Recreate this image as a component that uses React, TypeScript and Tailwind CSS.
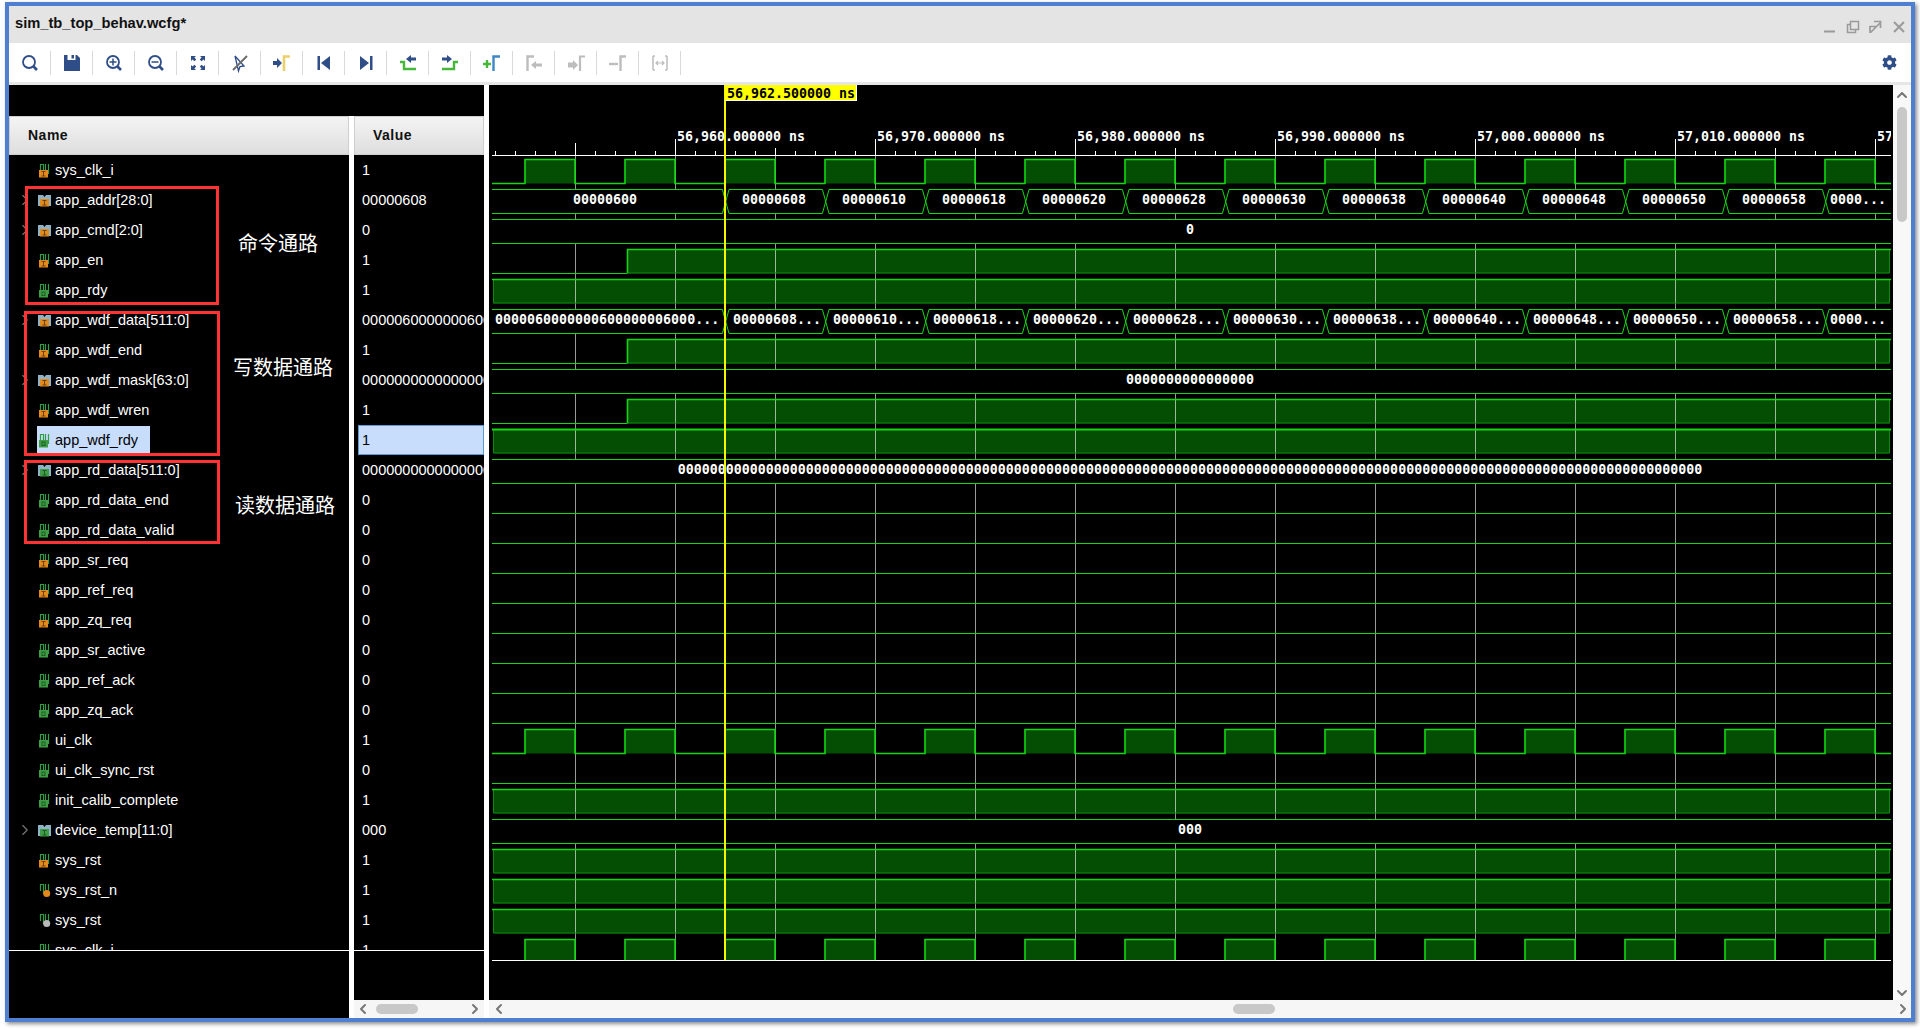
import { ChevronDown, ChevronLeft, ChevronRight, ChevronUp } from "lucide-react";
import { FaCog } from "react-icons/fa";

type SigKind = "in" | "out" | "busIn" | "busOut" | "reg" | "var";
type WaveKind = "clk" | "addr" | "wdf" | "step" | "high" | "low" | "solid";

interface Signal {
  name: string;
  value: string;
  kind: SigKind;
  wave: WaveKind;
  text?: string;
}

const signals: Signal[] = [
  { name: "sys_clk_i", value: "1", kind: "in", wave: "clk" },
  { name: "app_addr[28:0]", value: "00000608", kind: "busIn", wave: "addr" },
  { name: "app_cmd[2:0]", value: "0", kind: "busIn", wave: "solid", text: "0" },
  { name: "app_en", value: "1", kind: "in", wave: "step" },
  { name: "app_rdy", value: "1", kind: "out", wave: "high" },
  { name: "app_wdf_data[511:0]", value: "00000600000006000000060000000600", kind: "busIn", wave: "wdf" },
  { name: "app_wdf_end", value: "1", kind: "in", wave: "step" },
  { name: "app_wdf_mask[63:0]", value: "0000000000000000", kind: "busIn", wave: "solid", text: "0000000000000000" },
  { name: "app_wdf_wren", value: "1", kind: "in", wave: "step" },
  { name: "app_wdf_rdy", value: "1", kind: "out", wave: "high" },
  { name: "app_rd_data[511:0]", value: "00000000000000000000000000000000", kind: "busOut", wave: "solid", text: "0".repeat(128) },
  { name: "app_rd_data_end", value: "0", kind: "out", wave: "low" },
  { name: "app_rd_data_valid", value: "0", kind: "out", wave: "low" },
  { name: "app_sr_req", value: "0", kind: "in", wave: "low" },
  { name: "app_ref_req", value: "0", kind: "in", wave: "low" },
  { name: "app_zq_req", value: "0", kind: "in", wave: "low" },
  { name: "app_sr_active", value: "0", kind: "out", wave: "low" },
  { name: "app_ref_ack", value: "0", kind: "out", wave: "low" },
  { name: "app_zq_ack", value: "0", kind: "out", wave: "low" },
  { name: "ui_clk", value: "1", kind: "out", wave: "clk" },
  { name: "ui_clk_sync_rst", value: "0", kind: "out", wave: "low" },
  { name: "init_calib_complete", value: "1", kind: "out", wave: "high" },
  { name: "device_temp[11:0]", value: "000", kind: "busOut", wave: "solid", text: "000" },
  { name: "sys_rst", value: "1", kind: "in", wave: "high" },
  { name: "sys_rst_n", value: "1", kind: "reg", wave: "high" },
  { name: "sys_rst", value: "1", kind: "var", wave: "high" },
  { name: "sys_clk_i", value: "1", kind: "in", wave: "clk" },
];

const SELECTED = 9;
const X_MIN = 492;
const X_MAX = 1891;
const CURSOR = 725;
const GREEN = "#12d812";
const FILL = "#044e04";
const DARK = "#0a8a0a";
const MONO = "'DejaVu Sans Mono', monospace";

const HEX = ["608", "610", "618", "620", "628", "630", "638", "640", "648", "650", "658"];

function SignalIcon({ kind }: { kind: SigKind }) {
  const bus = kind === "busIn" || kind === "busOut";
  const box = kind === "in" || kind === "busIn" ? "#e48a1c" : "#3f9e45";
  const ink = kind === "in" || kind === "busIn" ? "#6b4210" : "#1d5c22";
  return (
    <svg width="14" height="16" viewBox="0 0 14 16" className="block">
      {bus ? (
        <path d="M1 3h5l1.500 2L9 3h5v11H1z" fill="#8fb2c6" />
      ) : (
        <path d="M3.500 9V2.500h3V12M8.500 2v9.500h3V2" fill="none" stroke="#2f9e44" strokeWidth="1.200" />
      )}
      {kind === "reg" || kind === "var" ? (
        <circle cx="9.700" cy="11.500" r="3.500" fill={kind === "reg" ? "#e48a1c" : "#b9b9b9"} />
      ) : bus ? (
        <g>
          <rect x="3" y="7" width="9" height="7.500" fill={box} />
          <path d="M5.500 8.500h4M7.500 8.500v4.500M5.500 13h4" stroke={ink} strokeWidth="1" fill="none" />
        </g>
      ) : (
        <g>
          <rect x="2" y="8" width="9" height="7.500" fill={box} />
          {kind === "in" ? (
            <path d="M4.500 9.500h4M6.500 9.500v4.500M4.500 14h4" stroke={ink} strokeWidth="1" fill="none" />
          ) : (
            <rect x="5" y="10" width="3" height="3.500" fill="none" stroke={ink} strokeWidth="1" />
          )}
        </g>
      )}
    </svg>
  );
}

function WaveRow({ sig, index }: { sig: Signal; index: number }) {
  const c = 170 + index * 30;
  const top = c - 10.5;
  const bot = c + 13.5;

  if (sig.wave === "low") {
    return <path d={`M${X_MIN} ${bot}H${X_MAX}`} stroke={GREEN} strokeWidth="1" fill="none" />;
  }

  if (sig.wave === "high") {
    return (
      <g>
        <path d={`M493.5 ${top}H1889.5V${bot - 0.5}H493.5Z`} fill="none" stroke={DARK} strokeWidth="1" />
        <path d={`M${X_MIN} ${top}H${X_MAX}`} stroke={GREEN} strokeWidth={index === SELECTED ? 2 : 1.5} fill="none" />
      </g>
    );
  }

  if (sig.wave === "step") {
    return (
      <g>
        <path d={`M${X_MIN} ${bot}H627`} stroke={GREEN} strokeWidth="1" fill="none" />
        <path d={`M628 ${bot - 0.5}H1889.5V${top}`} stroke={DARK} strokeWidth="1" fill="none" />
        <path d={`M627.5 ${bot}V${top}H${X_MAX}`} stroke={GREEN} strokeWidth="1.6" fill="none" />
      </g>
    );
  }

  if (sig.wave === "clk") {
    let d = `M${X_MIN} ${bot}`;
    for (let x = 525; x < 1880; x += 100) {
      d += `H${x}V${top}H${x + 50}V${bot}`;
    }
    d += `H${X_MAX}`;
    return <path d={d} stroke={GREEN} strokeWidth="1.6" fill="none" />;
  }

  const edges = sig.wave === "solid" ? [] : HEX.map((_, i) => CURSOR + 0.7 + i * 100).concat(1825.7);
  let lines = "";
  let from = X_MIN;
  for (const e of edges) {
    lines += `M${from} ${top}H${e - 3.3}L${e + 3.3} ${bot}M${from} ${bot}H${e - 3.3}L${e + 3.3} ${top}`;
    from = e + 3.3;
  }
  lines += `M${from} ${top}H${X_MAX}M${from} ${bot}H${X_MAX}`;

  return (
    <g>
      <rect x={X_MIN} y={top} width={X_MAX - X_MIN} height={bot - top} fill="#000" />
      <path d={lines} stroke={GREEN} strokeWidth="1" fill="none" />
    </g>
  );
}

function WaveFills() {
  return (
    <g>
      {signals.map((s, i) => {
        const c = 170 + i * 30;
        const top = c - 10.5;
        if (s.wave === "high") {
          return <rect key={i} x={493.5} y={top} width={1396} height={24} fill={FILL} />;
        }
        if (s.wave === "step") {
          return <rect key={i} x={627.5} y={top} width={1262} height={24} fill={FILL} />;
        }
        if (s.wave === "clk") {
          const pulses = [];
          for (let x = 525; x < 1880; x += 100) {
            pulses.push(<rect key={x} x={x} y={top} width={50} height={24} fill={FILL} />);
          }
          return <g key={i}>{pulses}</g>;
        }
        return null;
      })}
    </g>
  );
}

function BusText({ x, y, children, anchor = "middle" }: { x: number; y: number; children: string; anchor?: "middle" | "start" }) {
  return (
    <text x={x} y={y} textAnchor={anchor} fill="#fff" fontFamily={MONO} fontWeight="700" fontSize="13.3">
      {children}
    </text>
  );
}

function WavePanel() {
  const grid: number[] = [];
  for (let x = 575; x <= 1875; x += 100) grid.push(x);
  const minor: number[] = [];
  for (let x = 495; x < X_MAX; x += 20) minor.push(x);
  const labels = ["56,960", "56,970", "56,980", "56,990", "57,000", "57,010", "57,020"];

  return (
    <svg width="1404" height="915" viewBox="489 85 1404 915" className="block">
      <WaveFills />
      {grid.map((x) => (
        <path key={x} d={`M${x + 0.5} 156V960`} stroke="#fff" strokeOpacity="0.6" strokeWidth="1" />
      ))}
      {signals.map((s, i) => (
        <WaveRow key={i} sig={s} index={i} />
      ))}
      {/* last row runs past the list bottom, cut it at the axis line */}
      <rect x={X_MIN} y={960} width={X_MAX - X_MIN + 2} height={40} fill="#000" />

      <path d={`M${X_MIN} 155.5H${X_MAX}`} stroke="#fff" strokeWidth="1" />
      {minor.map((x) => (
        <path key={x} d={`M${x + 0.5} 151V155`} stroke="#fff" strokeWidth="1" />
      ))}
      {grid.map((x, i) => (
        <path key={x} d={`M${x + 0.5} ${i === 0 ? 143 : i % 2 === 1 ? 139 : 148}V155`} stroke="#fff" strokeWidth="1" />
      ))}
      {labels.map((l, i) => (
        <BusText key={l} x={677 + i * 200} y={141} anchor="start">
          {`${l}.000000 ns`}
        </BusText>
      ))}

      <BusText x={605} y={204}>00000600</BusText>
      {HEX.map((h, i) => (
        <BusText key={h} x={774 + i * 100} y={204}>{`00000${h}`}</BusText>
      ))}
      <BusText x={1830} y={204} anchor="start">0000...</BusText>

      <BusText x={495} y={324} anchor="start">0000060000000600000006000...</BusText>
      {HEX.map((h, i) => (
        <BusText key={h} x={733 + i * 100} y={324} anchor="start">{`00000${h}...`}</BusText>
      ))}
      <BusText x={1830} y={324} anchor="start">0000...</BusText>

      {signals.map((s, i) =>
        s.text ? (
          <BusText key={i} x={1190} y={174 + i * 30}>
            {s.text}
          </BusText>
        ) : null,
      )}

      <path d={`M${X_MIN} 960.5H${X_MAX}`} stroke="#fff" strokeWidth="1" />
      <rect x={X_MAX} y={85} width={2} height={915} fill="#000" />

      <path d={`M${CURSOR} 85V960`} stroke="#f5f500" strokeWidth="2" />
      <rect x={CURSOR} y={85} width={132} height={16} fill="#fff" />
      <rect x={CURSOR} y={85} width={131} height={15} fill="#ffff00" />
      <text x={727} y={98} fill="#000" fontFamily={MONO} fontWeight="700" fontSize="13.3">
        56,962.500000 ns
      </text>
    </svg>
  );
}

const NAVY = "#2f4d87";
const MUTE = "#bdbdbd";

function ToolIcon({ children }: { children: React.ReactNode }) {
  return (
    <div className="flex h-[24px] w-[42px] items-center justify-center border-r border-[#d9d9d9]">
      <svg width="20" height="20" viewBox="0 0 20 20" className="block">
        {children}
      </svg>
    </div>
  );
}

function Lens({ children }: { children?: React.ReactNode }) {
  return (
    <g>
      <circle cx="9" cy="9" r="6" fill="none" stroke={NAVY} strokeWidth="1.8" />
      <path d="M13.5 13.5L17 17" stroke={NAVY} strokeWidth="2.6" />
      {children}
    </g>
  );
}

function Toolbar() {
  return (
    <div className="flex h-[39px] items-center bg-white">
      <ToolIcon>
        <Lens />
      </ToolIcon>
      <ToolIcon>
        <path d="M2 2h3.5v5h8V2H15l3 3v13H2z" fill={NAVY} />
        <rect x="9.5" y="2" width="2.5" height="3.5" fill={NAVY} />
      </ToolIcon>
      <ToolIcon>
        <Lens>
          <path d="M5.5 9h7M9 5.5v7" stroke={NAVY} strokeWidth="1.5" />
        </Lens>
      </ToolIcon>
      <ToolIcon>
        <Lens>
          <path d="M5.5 9h7" stroke={NAVY} strokeWidth="1.5" />
        </Lens>
      </ToolIcon>
      <ToolIcon>
        <path
          d="M3 3h5L6.4 4.6 8.2 6.4 6.4 8.2 4.6 6.4 3 8zM17 3v5l-1.6-1.6-1.8 1.8-1.8-1.8 1.8-1.8L12 3zM3 17v-5l1.6 1.6 1.8-1.8 1.8 1.8-1.8 1.8L8 17zM17 17h-5l1.6-1.6-1.8-1.8 1.8-1.8 1.8 1.8L17 12z"
          fill={NAVY}
        />
      </ToolIcon>
      <ToolIcon>
        <path d="M5 3l9 10-4 .5-1.5 4.5z" fill="none" stroke={NAVY} strokeWidth="1.3" />
        <path d="M3 17L17 3" stroke="#6d6d6d" strokeWidth="2" />
      </ToolIcon>
      <ToolIcon>
        <path d="M1 8h4V5l5 5-5 5v-3H1z" fill={NAVY} />
        <path d="M12 18V3.5h6" fill="none" stroke="#ecd06b" strokeWidth="2.6" />
      </ToolIcon>
      <ToolIcon>
        <rect x="3.5" y="3" width="2.5" height="14" fill={NAVY} />
        <path d="M16 3v14l-9-7z" fill={NAVY} />
      </ToolIcon>
      <ToolIcon>
        <rect x="14" y="3" width="2.5" height="14" fill={NAVY} />
        <path d="M4 3v14l9-7z" fill={NAVY} />
      </ToolIcon>
      <ToolIcon>
        <path d="M2 9h4v7h12" fill="none" stroke="#45b83a" strokeWidth="2.4" />
        <path d="M8 6l5-4v2.5h5v3h-5V10z" fill={NAVY} />
      </ToolIcon>
      <ToolIcon>
        <path d="M2 16h12V9h4" fill="none" stroke="#45b83a" strokeWidth="2.4" />
        <path d="M12 6L7 2v2.5H2v3h5V10z" fill={NAVY} />
      </ToolIcon>
      <ToolIcon>
        <path d="M1 11h8M5 7v8" stroke="#45b83a" strokeWidth="2.4" fill="none" />
        <path d="M11.5 18V3.5H18" fill="none" stroke="#3f86c6" strokeWidth="2.4" />
      </ToolIcon>
      <ToolIcon>
        <path d="M3.5 18V3.5H10" fill="none" stroke={MUTE} strokeWidth="2.4" />
        <path d="M7 12l5-4v2.5h6v3h-6V16z" fill={MUTE} />
      </ToolIcon>
      <ToolIcon>
        <path d="M2 9.5h5V7l5 5-5 5v-2.500H2z" fill={MUTE} />
        <path d="M14 18V3.5h5" fill="none" stroke={MUTE} strokeWidth="2.2" />
      </ToolIcon>
      <ToolIcon>
        <path d="M1 11h9" stroke={MUTE} strokeWidth="2.4" fill="none" />
        <path d="M12.5 18V3.5H18" fill="none" stroke={MUTE} strokeWidth="2.4" />
      </ToolIcon>
      <ToolIcon>
        <path d="M3 3h2M3 17h2M3 3v14M17 3h-2M17 17h-2M17 3v14" stroke={MUTE} strokeWidth="1.5" fill="none" />
        <path d="M6 10h8M8 8l-2 2 2 2M12 8l2 2-2 2" stroke={MUTE} strokeWidth="1.2" fill="none" />
      </ToolIcon>
      <FaCog className="ml-auto mr-[14px] text-[15px] text-[#2f4d87]" />
    </div>
  );
}

function WindowButtons() {
  return (
    <svg width="82" height="14" viewBox="0 0 82 14" className="mt-[5px] block">
      <path d="M0 11.5h11" stroke="#9a9a9a" strokeWidth="2" />
      <path d="M26.500 4.500h-3v8h8v-3M26.500 1.500h8v8h-8z" stroke="#9a9a9a" strokeWidth="1.5" fill="none" />
      <path d="M46 13V6.500h6.500M46.500 12.500L56 3M50 1.500h6.500V8" stroke="#9a9a9a" strokeWidth="1.7" fill="none" />
      <path d="M70 2l10 10M80 2L70 12" stroke="#9a9a9a" strokeWidth="2" fill="none" />
    </svg>
  );
}

function ColumnHeader({ children, className }: { children: string; className: string }) {
  return (
    <div
      className={`flex h-[39px] shrink-0 items-center border border-[#cfcfcf] bg-gradient-to-b from-[#f4f4f4] to-[#dedede] text-[14px] font-bold tracking-[0.5px] text-[#111] ${className}`}
    >
      {children}
    </div>
  );
}

function NameColumn() {
  return (
    <div className="relative flex w-[340px] flex-col bg-black">
      <ColumnHeader className="pl-[18px]">Name</ColumnHeader>
      <div className="h-[796px] shrink-0 overflow-hidden border-b border-white">
        {signals.map((s, i) => {
          const isBus = s.kind === "busIn" || s.kind === "busOut";
          const selected = i === SELECTED;
          return (
            <div key={i} className="flex h-[30px] items-center">
              <div className="flex w-[28px] justify-start pl-[7px]">
                {isBus ? <ChevronRight size={18} strokeWidth={1.5} className="text-[#777]" /> : null}
              </div>
              <div
                className={`flex h-[28px] items-center pr-[12px] text-[14.5px] ${
                  selected ? "bg-[#c8dcfb] text-black" : "text-white"
                }`}
              >
                <span className="w-[18px]">
                  <SignalIcon kind={s.kind} />
                </span>
                <span className="pt-[1px]">{s.name}</span>
              </div>
            </div>
          );
        })}
      </div>

      <div className="absolute left-[16px] top-[70px] h-[119px] w-[194px] border-[3px] border-[#ff3333]" />
      <div className="absolute left-[15px] top-[195px] h-[145px] w-[196px] border-[3px] border-[#ff3333]" />
      <div className="absolute left-[15px] top-[344px] h-[84px] w-[196px] border-[3px] border-[#ff3333]" />

      <div className="absolute left-[229px] top-[113px] text-[20px] leading-[30px] text-white">命令通路</div>
      <div className="absolute left-[224px] top-[237px] text-[20px] leading-[30px] text-white">写数据通路</div>
      <div className="absolute left-[226px] top-[375px] text-[20px] leading-[30px] text-white">读数据通路</div>
    </div>
  );
}

function ValueColumn() {
  return (
    <div className="flex w-[130px] flex-col bg-black">
      <ColumnHeader className="pl-[18px]">Value</ColumnHeader>
      <div className="h-[796px] shrink-0 overflow-hidden border-b border-white">
        {signals.map((s, i) =>
          i === SELECTED ? (
            <div
              key={i}
              className="ml-[4px] flex h-[30px] items-center border border-[#5b9bd5] bg-[#c8dcfb] pl-[3px] pt-[1px] text-[14.5px] text-black"
            >
              {s.value}
            </div>
          ) : (
            <div key={i} className="flex h-[30px] items-center overflow-hidden whitespace-nowrap pl-[8px] pt-[1px] text-[14.5px] text-white">
              {s.value}
            </div>
          ),
        )}
      </div>
      <div className="flex-1" />
      <div className="flex h-[18px] shrink-0 items-center bg-[#f6f6f6] pl-[1px] pr-[1px]">
        <ChevronLeft size={16} strokeWidth={3} className="text-[#777]" />
        <div className="ml-[5px] h-[10px] w-[42px] rounded-full bg-[#c8c8c8]" />
        <ChevronRight size={16} strokeWidth={3} className="ml-auto text-[#777]" />
      </div>
    </div>
  );
}

export default function App() {
  return (
    <div
      className="h-[1030px] w-[1920px] overflow-hidden bg-white pl-[5px] pt-[2px]"
      style={{ fontFamily: "'Liberation Sans', 'Noto Sans CJK SC', sans-serif" }}
    >
      <div className="flex h-[1020px] w-[1910px] flex-col border-4 border-[#4f7fd0] bg-white shadow-[2px_2px_4px_rgba(0,0,0,0.45)]">
        <div className="flex h-[37px] shrink-0 items-center justify-between bg-[#e4e4e4] pl-[6px] pr-[5px]">
          <span className="mb-[3px] text-[14.7px] font-bold leading-none text-[#111]">sim_tb_top_behav.wcfg*</span>
          <WindowButtons />
        </div>
        <Toolbar />
        <div className="h-[3px] shrink-0 bg-[#e6e6e6]" />

        <div className="flex min-h-0 flex-1">
          <div className="flex w-[475px] shrink-0 flex-col">
            <div className="h-[31px] shrink-0 bg-black" />
            <div className="flex min-h-0 flex-1 gap-[5px]">
              <NameColumn />
              <ValueColumn />
            </div>
          </div>

          <div className="ml-[5px] flex min-w-0 flex-1 flex-col">
            <div className="flex h-[915px] shrink-0">
              <div className="h-[915px] w-[1404px] shrink-0 bg-black">
                <WavePanel />
              </div>
              <div className="flex w-[18px] flex-col items-center bg-[#f8f8f8] pt-[2px]">
                <ChevronUp size={16} strokeWidth={3} className="text-[#777]" />
                <div className="mt-[4px] h-[115px] w-[10px] rounded-full bg-[#c8c8c8]" />
                <ChevronDown size={16} strokeWidth={3} className="mt-auto mb-[-1px] text-[#777]" />
              </div>
            </div>
            <div className="flex h-[18px] shrink-0 items-center bg-[#f6f6f6] pl-[2px]">
              <ChevronLeft size={16} strokeWidth={3} className="text-[#777]" />
              <div className="ml-[726px] h-[10px] w-[42px] rounded-full bg-[#c8c8c8]" />
              <ChevronRight size={16} strokeWidth={3} className="ml-auto text-[#777]" />
            </div>
          </div>
        </div>
      </div>
    </div>
  );
}
